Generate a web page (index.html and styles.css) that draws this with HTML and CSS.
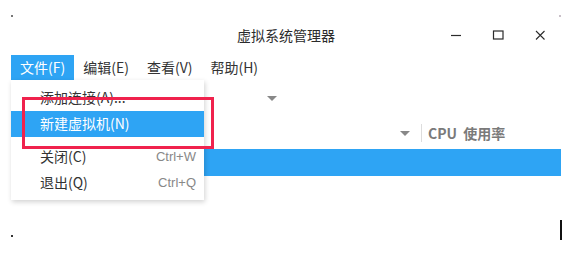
FILE: index.html
```html
<!DOCTYPE html>
<html lang="zh-CN">

<head>
    <meta charset="UTF-8">
    <meta name="viewport" content="width=device-width, initial-scale=1.0">
    <title>虚拟系统管理器</title>
    <link rel="stylesheet" href="styles.css">
</head>

<body>
    <div class="window">
        <span class="mark mark-tl"></span>
        <span class="mark mark-tr"></span>
        <span class="mark mark-bl"></span>
        <span class="mark-br"></span>

        <div class="titlebar">
            <div></div>
            <div class="title">虚拟系统管理器</div>
            <div class="controls">
                <button class="ctl">
                    <svg width="12" height="12" viewBox="0 0 12 12"><path d="M1 6.5h10" stroke="#2b2b2b" stroke-width="1.2" /></svg>
                </button>
                <button class="ctl">
                    <svg width="12" height="12" viewBox="0 0 12 12"><rect x="1.5" y="2" width="9.5" height="8" fill="none" stroke="#2b2b2b" stroke-width="1.2" /></svg>
                </button>
                <button class="ctl">
                    <svg width="12" height="12" viewBox="0 0 12 12"><path d="M2 2l8.5 8.5M10.5 2L2 10.5" stroke="#2b2b2b" stroke-width="1.1" /></svg>
                </button>
            </div>
        </div>

        <div class="menubar">
            <span class="menu active">文件(F)</span>
            <span class="menu">编辑(E)</span>
            <span class="menu">查看(V)</span>
            <span class="menu">帮助(H)</span>
        </div>

        <div class="content">
            <div class="toolbar">
                <span class="arrow"></span>
            </div>
            <div class="header">
                <div class="col-name"><span class="arrow"></span></div>
                <div class="col-cpu">CPU&nbsp; 使用率</div>
            </div>
            <div class="row selected"></div>
        </div>

        <!-- open file menu -->
        <div class="dropdown">
            <div class="item">添加连接(A)...</div>
            <div class="item hover">新建虚拟机(N)</div>
            <div class="sep"></div>
            <div class="item">关闭(C)<span class="key">Ctrl+W</span></div>
            <div class="item">退出(Q)<span class="key">Ctrl+Q</span></div>
        </div>

        <div class="highlight-box"></div>
    </div>
</body>

</html>
```

FILE: styles.css
```css
body {
    margin: 0;
    background-color: #fff;
    font-family: "Noto Sans CJK SC", "Noto Sans", sans-serif;
    color: #333;
}

.window {
    position: relative;
    width: 550px;
    height: 225px;
    margin: 15px 0 0 11px;
}

.mark {
    position: absolute;
    width: 2px;
    height: 2px;
    background-color: #777;
}

.mark-tl {
    left: 0;
    top: 0;
}

.mark-tr {
    right: 0;
    top: 0;
    background-color: #c9c0c8;
}

.mark-bl {
    left: 0;
    top: 220px;
    background-color: #333;
}

.mark-br {
    position: absolute;
    left: 549px;
    top: 205px;
    width: 2px;
    height: 22px;
    background-color: #111;
}

.titlebar {
    height: 40px;
    display: grid;
    grid-template-columns: 1fr auto 1fr;
    align-items: center;
}

.title {
    font-size: 14px;
    color: #2b2b2b;
}

.controls {
    display: flex;
    justify-content: flex-end;
}

.ctl {
    width: 42px;
    height: 40px;
    border: none;
    background: none;
    padding: 0;
    display: flex;
    align-items: center;
    justify-content: center;
}

.menubar {
    height: 25px;
    display: flex;
}

.menu {
    padding: 0 9px;
    line-height: 25px;
    font-size: 14px;
    color: #333;
}

.menu.active {
    background-color: #2ea4f4;
    color: #fff;
}

.toolbar {
    height: 38px;
    position: relative;
}

.arrow {
    display: inline-block;
    width: 0;
    height: 0;
    border-left: 5px solid transparent;
    border-right: 5px solid transparent;
    border-top: 5px solid #888;
}

.toolbar .arrow {
    margin: 16px 0 0 256px;
}

.header {
    height: 30px;
    display: flex;
    align-items: center;
}

.col-name {
    width: 410px;
    display: flex;
    justify-content: flex-end;
    padding-right: 11px;
    box-sizing: border-box;
}

.col-cpu {
    border-left: 1px solid #ddd;
    height: 18px;
    line-height: 18px;
    padding-left: 6px;
    font-size: 14px;
    font-weight: bold;
    color: #7a7a7a;
}

.row {
    height: 27px;
    margin-top: 1px;
}

.row.selected {
    background-color: #2ea4f4;
}

.dropdown {
    position: absolute;
    left: 0;
    top: 65px;
    width: 193px;
    padding: 5px 0 4px;
    background-color: #fff;
    box-shadow: 1px 2px 5px rgba(0, 0, 0, 0.18);
}

.item {
    height: 26px;
    line-height: 25px;
    padding: 0 8px 0 29px;
    font-size: 14px;
    color: #333;
    display: flex;
    justify-content: space-between;
}

.item.hover {
    background-color: #2ea4f4;
    color: #fff;
}

.sep {
    height: 7px;
}

.key {
    font-family: "Liberation Sans", sans-serif;
    font-size: 13px;
    color: #888;
}

.highlight-box {
    position: absolute;
    left: 11px;
    top: 82px;
    width: 192px;
    height: 52px;
    border: 3px solid #f0224d;
    box-sizing: border-box;
}
```
